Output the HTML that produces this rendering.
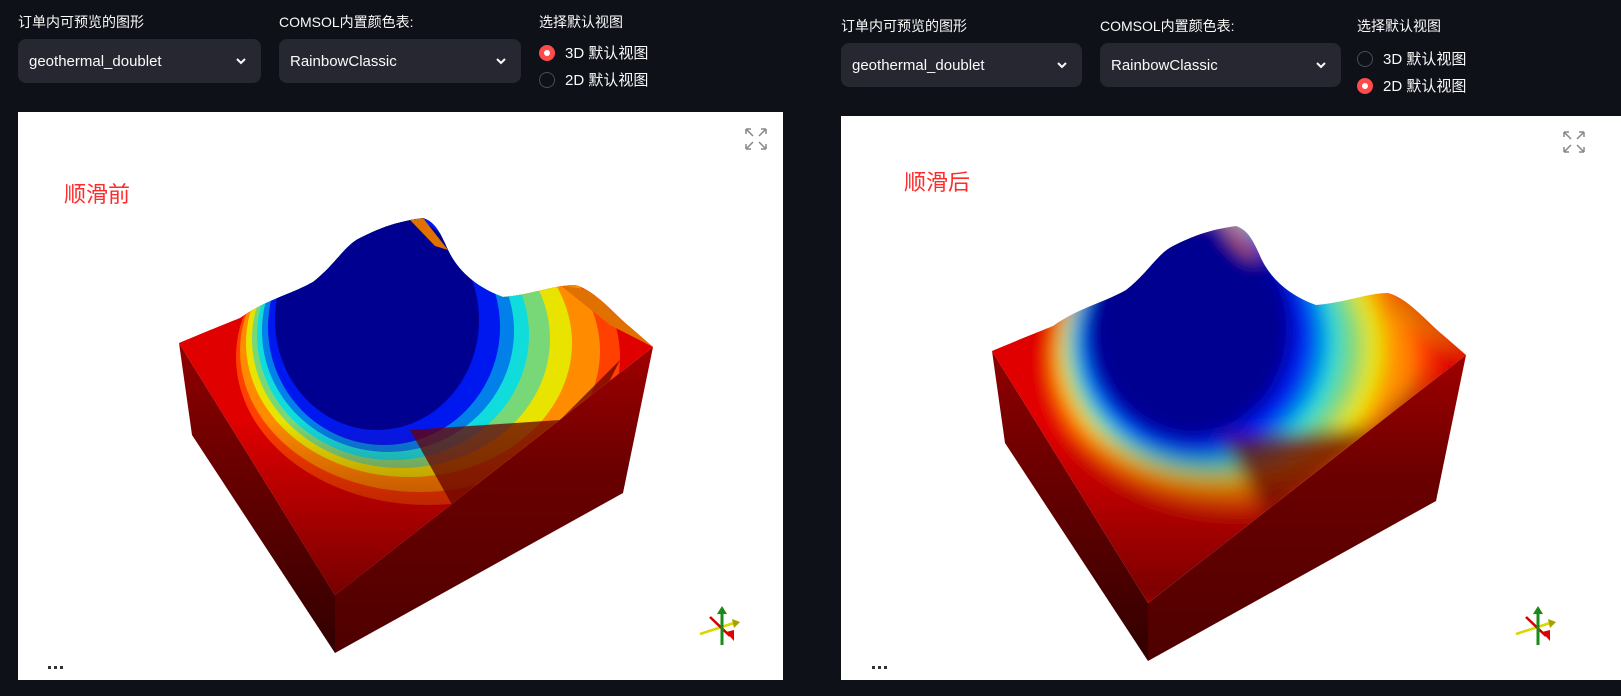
<!DOCTYPE html>
<html><head><meta charset="utf-8">
<style>
*{margin:0;padding:0;box-sizing:border-box}
body{width:1621px;height:696px;background:#0e1117;position:relative;overflow:hidden;font-family:"Liberation Sans","Noto Sans CJK SC",sans-serif;color:#fafafa}
.lbl{position:absolute;font-size:14px;color:#fafafa}
.dd{position:absolute;height:44px;background:#262730;border-radius:8px;font-size:15px;line-height:46px;padding-left:11px}
.dd svg{position:absolute;right:14px;top:17px}
.rad{position:absolute;font-size:15px;height:20px;line-height:20px;padding-left:26px}
.rad:before{content:"";position:absolute;left:0;top:1px;width:16px;height:16px;border-radius:50%;border:1px solid #4a4c57;box-sizing:border-box}
.rad.on:before{background:#ff4b4b;border:none}
.rad.on:after{content:"";position:absolute;left:5px;top:6px;width:6px;height:6px;border-radius:50%;background:#fff}
.panel{position:absolute;background:#fff}
</style></head><body>
<div class="lbl" style="left:18px;top:12px">订单内可预览的图形</div>
<div class="dd" style="left:18px;top:39px;width:243px">geothermal_doublet<svg width="12" height="10" viewBox="0 0 12 10"><path d="M2 3l4 4 4-4" stroke="#fafafa" stroke-width="2" fill="none"/></svg></div>
<div class="lbl" style="left:279px;top:12px">COMSOL内置颜色表:</div>
<div class="dd" style="left:279px;top:39px;width:242px">RainbowClassic<svg width="12" height="10" viewBox="0 0 12 10"><path d="M2 3l4 4 4-4" stroke="#fafafa" stroke-width="2" fill="none"/></svg></div>
<div class="lbl" style="left:539px;top:12px">选择默认视图</div>
<div class="rad on" style="left:539px;top:44px">3D 默认视图</div>
<div class="rad" style="left:539px;top:71px">2D 默认视图</div>

<div class="lbl" style="left:841px;top:16px">订单内可预览的图形</div>
<div class="dd" style="left:841px;top:43px;width:241px">geothermal_doublet<svg width="12" height="10" viewBox="0 0 12 10"><path d="M2 3l4 4 4-4" stroke="#fafafa" stroke-width="2" fill="none"/></svg></div>
<div class="lbl" style="left:1100px;top:16px">COMSOL内置颜色表:</div>
<div class="dd" style="left:1100px;top:43px;width:241px">RainbowClassic<svg width="12" height="10" viewBox="0 0 12 10"><path d="M2 3l4 4 4-4" stroke="#fafafa" stroke-width="2" fill="none"/></svg></div>
<div class="lbl" style="left:1357px;top:16px">选择默认视图</div>
<div class="rad" style="left:1357px;top:50px">3D 默认视图</div>
<div class="rad on" style="left:1357px;top:77px">2D 默认视图</div>

<div class="panel" style="left:18px;top:112px;width:765px;height:568px"></div>
<div class="panel" style="left:841px;top:116px;width:780px;height:564px"></div>

<svg width="1621" height="696" style="position:absolute;left:0;top:0">
<defs>
<clipPath id="topc"><path d="M179,343 C210,330 230,322 240,318 C265,300 290,295 313,282 C335,265 345,245 360,238 C380,228 395,222 423,218 C435,222 440,232 448,250 C455,265 470,285 503,297 C530,295 555,285 575,285 C595,290 615,315 630,327 L653,347 L335,595 Z"/></clipPath>
<linearGradient id="lf" x1="0" y1="0" x2="0" y2="1"><stop offset="0" stop-color="#900000"/><stop offset="1" stop-color="#300000"/></linearGradient>
<linearGradient id="rf" x1="0" y1="0" x2="0" y2="1"><stop offset="0" stop-color="#a00000"/><stop offset="0.4" stop-color="#6a0000"/><stop offset="1" stop-color="#4e0000"/></linearGradient>
<linearGradient id="frontshade" x1="0" y1="0" x2="0" y2="1"><stop offset="0" stop-color="#600000" stop-opacity="0"/><stop offset="0.55" stop-color="#600000" stop-opacity="0"/><stop offset="1" stop-color="#600000" stop-opacity="0.85"/></linearGradient>
<filter id="bl" x="-20%" y="-20%" width="140%" height="140%"><feGaussianBlur stdDeviation="9"/></filter>
<g id="sides">
<path d="M179,343 L335,595 L335,653 L192,435 Z" fill="url(#lf)"/>
<path d="M335,595 L653,347 L623,493 L335,653 Z" fill="url(#rf)"/>
</g>
<g id="bands">
<rect x="150" y="200" width="520" height="470" fill="#e00000"/>
<ellipse cx="428" cy="357" rx="192" ry="148" fill="#ff4000"/>
<ellipse cx="420" cy="351" rx="180" ry="141" fill="#ff8c00"/>
<ellipse cx="409" cy="343" rx="163" ry="134" fill="#e8e400"/>
<ellipse cx="401" cy="339" rx="149" ry="129" fill="#78d878"/>
<ellipse cx="393" cy="335" rx="136" ry="125" fill="#10dcdc"/>
<ellipse cx="388" cy="331" rx="126" ry="121" fill="#0080e8"/>
<ellipse cx="384" cy="327" rx="116" ry="118" fill="#0018f0"/>
<ellipse cx="377" cy="320" rx="102" ry="110" fill="#000090"/>
<path d="M410,430 L455,510 L530,455 L600,400 L620,360 L560,420 Z" fill="#6a0000" opacity="0.75"/>
<path d="M560,285 L600,292 L653,347 L610,325 Z" fill="#e07000"/>
<path d="M410,220 L423,218 L448,250 L435,246 Z" fill="#e07000"/>
<rect x="150" y="200" width="520" height="400" fill="url(#frontshade)"/>
</g>
</defs>
<use href="#sides"/>
<g clip-path="url(#topc)"><use href="#bands"/></g>
<g transform="translate(813,8)">
<use href="#sides"/>
<g clip-path="url(#topc)"><g filter="url(#bl)"><use href="#bands"/></g></g>
</g>
<text x="64" y="202" font-size="22" fill="#ff2b2b" font-family="Liberation Sans,Noto Sans CJK SC,sans-serif">顺滑前</text>
<text x="904" y="190" font-size="22" fill="#ff2b2b" font-family="Liberation Sans,Noto Sans CJK SC,sans-serif">顺滑后</text>
<g id="exp" stroke="#888" stroke-width="1.5" fill="none">
<path d="M746,129 L753,136 M746,129 h5 M746,129 v5"/>
<path d="M766,129 L759,136 M766,129 h-5 M766,129 v5"/>
<path d="M746,149 L753,142 M746,149 h5 M746,149 v-5"/>
<path d="M766,149 L759,142 M766,149 h-5 M766,149 v-5"/>
</g>
<use href="#exp" transform="translate(818,3)"/>
<g id="dots" fill="#333"><rect x="48" y="666" width="3" height="3"/><rect x="54" y="666" width="3" height="3"/><rect x="60" y="666" width="3" height="3"/></g>
<use href="#dots" transform="translate(824,0)"/>
<g id="ax">
<line x1="700" y1="634" x2="734" y2="623" stroke="#d8d800" stroke-width="2.5"/><path d="M732,619 L740,622 L734,628 Z" fill="#a8a000"/>
<line x1="710" y1="617" x2="730" y2="636" stroke="#d00000" stroke-width="2.5"/><path d="M726,632 L734,641 L734,630 Z" fill="#e00000"/>
<line x1="722" y1="645" x2="722" y2="612" stroke="#1a8a1a" stroke-width="3"/><path d="M717,614 L722,606 L727,614 Z" fill="#1a8a1a"/>
</g>
<use href="#ax" transform="translate(816,0)"/>
</svg>
</body></html>
